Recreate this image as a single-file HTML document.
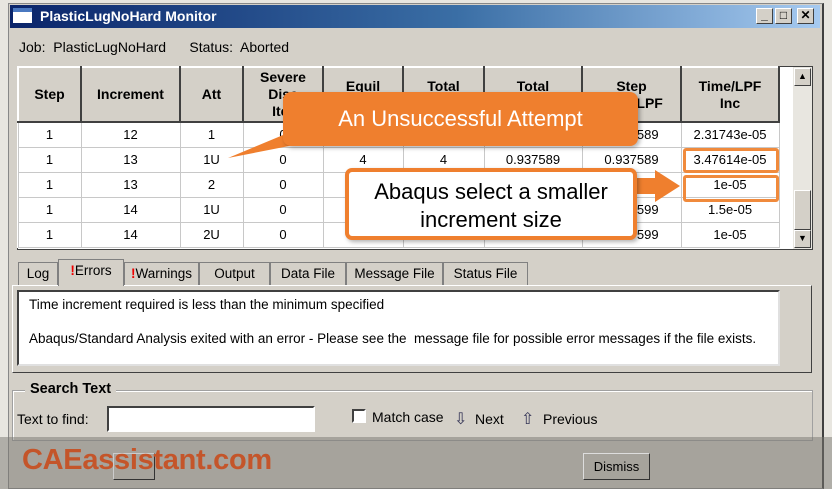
<!DOCTYPE html>
<html><head><meta charset="utf-8"><style>
*{margin:0;padding:0;box-sizing:border-box}
body{width:832px;height:489px;overflow:hidden;background:#e8e6e0;font-family:"Liberation Sans",sans-serif;position:relative}
.a{position:absolute}
#win{left:8px;top:3px;width:816px;height:486px;background:#d4d0c8;border:1px solid #888;border-right:2px solid #404040}
#title{left:10px;top:5px;width:810px;height:23px;background:linear-gradient(90deg,#0a246a 0%,#3a6ea5 55%,#a6caf0 100%);color:#fff;font-weight:bold;font-size:14px;line-height:23px;padding-left:30px}
.tb{top:8px;width:17px;height:16px;background:#d4d0c8;border:1px solid;border-color:#fff #404040 #404040 #fff;font-size:12px;text-align:center;line-height:13px;font-weight:bold;color:#000}
.t{font-size:14px;color:#000}
table{border-collapse:collapse;position:absolute;left:17px;top:66px;background:#fff;font-size:13px}
td,th{border:1px solid #c8c8c8;text-align:center;height:25px;padding:0}
th{background:#d4d0c8;border:2px solid #404040;border-top-color:#fff;border-left-color:#fff;font-size:14px;height:55px;line-height:17px}
.tab{top:262px;height:23px;border:1px solid #808080;border-bottom:none;background:#d4d0c8;font-size:13.5px;line-height:22px;text-align:center}
.ex{color:#e00;font-weight:bold}
</style></head><body>
<div class="a" id="win"></div>
<div class="a" id="title">PlasticLugNoHard Monitor</div>
<div class="a" style="left:13px;top:8px;width:19px;height:15px;background:#fff;border-top:4px solid #4a78c0"></div>
<div class="a tb" style="left:756px">_</div>
<div class="a tb" style="left:775px">□</div>
<div class="a tb" style="left:797px">✕</div>
<div class="a t" style="left:19px;top:39px">Job:&nbsp; PlasticLugNoHard &nbsp;&nbsp;&nbsp;&nbsp; Status:&nbsp; Aborted</div>
<div class="a" style="left:17px;top:66px;width:796px;height:184px;background:#fff;border:1px solid #404040"></div>
<table>
<tr><th style="width:63px">Step</th><th style="width:99px">Increment</th><th style="width:63px">Att</th><th style="width:80px">Severe<br>Disc<br>Iter</th><th style="width:80px">Equil<br>Iter</th><th style="width:81px">Total<br>Iter</th><th style="width:98px">Total<br>Time</th><th style="width:99px">Step<br>Time/LPF</th><th style="width:98px">Time/LPF<br>Inc</th></tr>
<tr><td>1</td><td>12</td><td>1</td><td>0</td><td>4</td><td>4</td><td>0.937589</td><td>0.937589</td><td>2.31743e-05</td></tr>
<tr><td>1</td><td>13</td><td>1U</td><td>0</td><td>4</td><td>4</td><td>0.937589</td><td>0.937589</td><td>3.47614e-05</td></tr>
<tr><td>1</td><td>13</td><td>2</td><td>0</td><td>4</td><td>4</td><td>0.937599</td><td>0.937599</td><td>1e-05</td></tr>
<tr><td>1</td><td>14</td><td>1U</td><td>0</td><td>4</td><td>4</td><td>0.937599</td><td>0.937599</td><td>1.5e-05</td></tr>
<tr><td>1</td><td>14</td><td>2U</td><td>0</td><td>4</td><td>4</td><td>0.937599</td><td>0.937599</td><td>1e-05</td></tr>
</table>
<div class="a" style="left:793px;top:67px;width:19px;height:182px;background:#e8e6e0"></div>
<div class="a tb" style="left:794px;top:68px;height:18px;font-size:9px;line-height:15px">▲</div>
<div class="a tb" style="left:794px;top:190px;height:40px"></div>
<div class="a tb" style="left:794px;top:230px;height:18px;font-size:9px;line-height:15px">▼</div>
<div class="a" style="left:683px;top:148px;width:96px;height:25px;border:3px solid #f08a3c;border-radius:3px"></div>
<div class="a" style="left:683px;top:175px;width:96px;height:27px;border:3px solid #f08a3c;border-radius:3px"></div>
<svg class="a" style="left:0;top:0" width="832" height="260">
<polygon points="228,158 300,128 330,138" fill="#ef7f2e"/>
<polygon points="630,178 655,178 655,170 680,186 655,202 655,194 630,194" fill="#ef7f2e"/>
</svg>
<div class="a" style="left:283px;top:92px;width:355px;height:54px;background:#ef7f2e;border-radius:8px;color:#fff;font-size:22px;line-height:54px;text-align:center;box-shadow:2px 2px 4px rgba(0,0,0,.3)">An Unsuccessful Attempt</div>
<div class="a" style="left:345px;top:168px;width:292px;height:72px;background:#fff;border:4px solid #ef7f2e;border-radius:7px;color:#000;font-size:22px;line-height:28px;text-align:center;padding-top:6px;box-shadow:2px 2px 4px rgba(0,0,0,.3)">Abaqus select a smaller<br>increment size</div>
<div class="a tab" style="left:18px;width:40px">Log</div>
<div class="a tab" style="left:58px;top:259px;height:27px;width:66px;border-bottom:none;background:#d4d0c8;z-index:2"><span class="ex">!</span>Errors</div>
<div class="a tab" style="left:124px;width:75px"><span class="ex">!</span>Warnings</div>
<div class="a tab" style="left:199px;width:71px">Output</div>
<div class="a tab" style="left:270px;width:76px">Data File</div>
<div class="a tab" style="left:346px;width:97px">Message File</div>
<div class="a tab" style="left:443px;width:85px">Status File</div>
<div class="a" style="left:12px;top:285px;width:800px;height:88px;border:1px solid;border-color:#fff #404040 #404040 #fff"></div>
<div class="a" style="left:17px;top:290px;width:763px;height:76px;background:#fff;border:2px solid;border-color:#404040 #e0e0e0 #e0e0e0 #404040;font-size:13.5px;padding:4px 10px;line-height:17px">Time increment required is less than the minimum specified<br><br>Abaqus/Standard Analysis exited with an error - Please see the&nbsp; message file for possible error messages if the file exists.</div>
<div class="a" style="left:12px;top:390px;width:801px;height:51px;border:1px solid #a0a0a0;box-shadow:1px 1px 0 #fff inset"></div>
<div class="a" style="left:25px;top:381px;background:#d4d0c8;padding:0 5px;font-weight:bold;font-size:14.5px">Search Text</div>
<div class="a t" style="left:17px;top:411px">Text to find:</div>
<div class="a" style="left:107px;top:406px;width:208px;height:26px;background:#fff;border:2px solid;border-color:#404040 #fff #fff #404040"></div>
<div class="a" style="left:352px;top:409px;width:14px;height:14px;background:#fff;border:2px solid;border-color:#404040 #fff #fff #404040"></div>
<div class="a t" style="left:372px;top:409px">Match case</div>
<div class="a" style="left:454px;top:409px;color:#335;font-size:16px">⇩</div>
<div class="a t" style="left:475px;top:411px">Next</div>
<div class="a" style="left:521px;top:409px;color:#335;font-size:16px">⇧</div>
<div class="a t" style="left:543px;top:411px">Previous</div>
<div class="a" style="left:0;top:437px;width:832px;height:52px;background:rgba(120,118,112,.5)"></div>
<div class="a" style="left:113px;top:453px;width:42px;height:27px;border:1px solid;border-color:#ccc #333 #333 #ccc"></div>
<div class="a" style="left:583px;top:453px;width:67px;height:27px;border:1px solid;border-color:#ddd #333 #333 #ddd;font-size:13px;text-align:center;line-height:25px">Dismiss</div>
<div class="a" style="left:22px;top:444px;color:#c4552a;font-weight:bold;font-size:29px;letter-spacing:-0.3px">CAEassistant.com</div>
</body></html>
